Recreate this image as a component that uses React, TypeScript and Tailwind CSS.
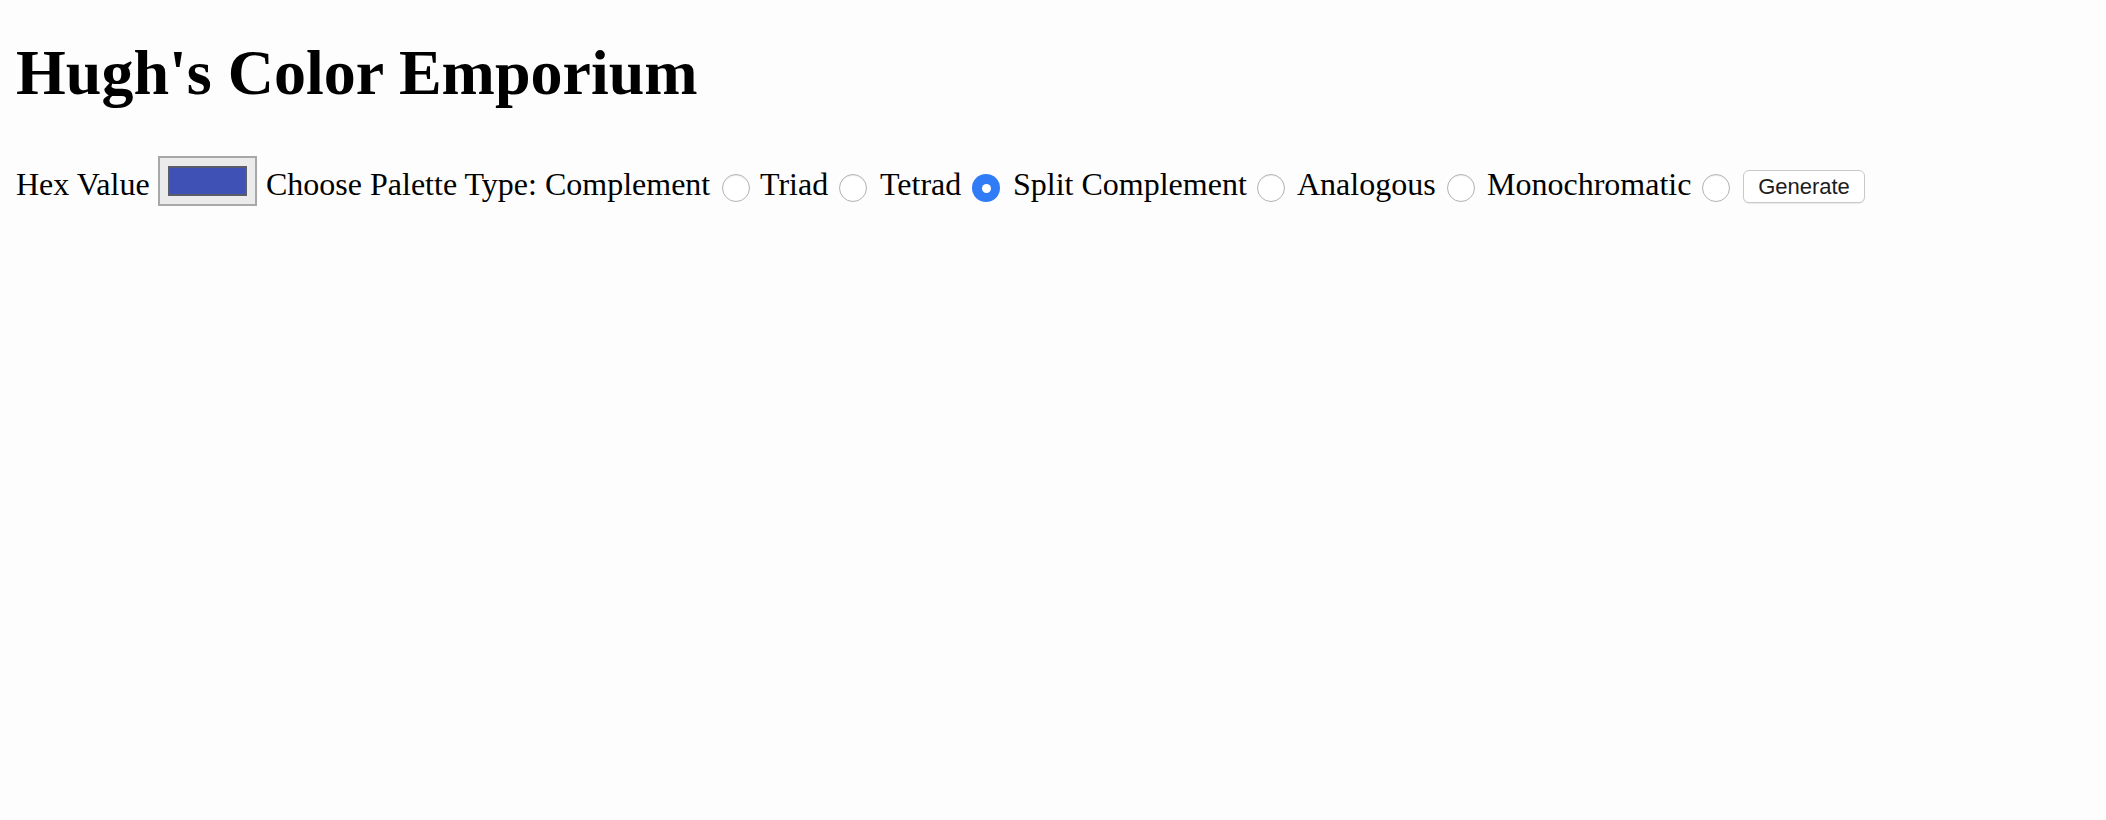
import { useState } from "react";

interface PaletteOption {
  label: string;
  textWidth: string;
  gapAfter: string;
}

// widths keep each radio where the reference puts it
const options: PaletteOption[] = [
  { label: "Choose Palette Type: Complement", textWidth: "w-[456px]", gapAfter: "mr-[10px]" },
  { label: "Triad", textWidth: "w-[79px]", gapAfter: "mr-[13px]" },
  { label: "Tetrad", textWidth: "w-[92px]", gapAfter: "mr-[13px]" },
  { label: "Split Complement", textWidth: "w-[244px]", gapAfter: "mr-[12px]" },
  { label: "Analogous", textWidth: "w-[150px]", gapAfter: "mr-[12px]" },
  { label: "Monochromatic", textWidth: "w-[215px]", gapAfter: "mr-[13px]" },
];

function Radio({ checked, onClick }: { checked: boolean; onClick: () => void }) {
  return (
    <span
      role="radio"
      aria-checked={checked}
      onClick={onClick}
      className={
        checked
          ? "mt-[18px] flex size-[28px] shrink-0 cursor-pointer items-center justify-center rounded-full bg-[#2f7cf6]"
          : "mt-[18px] flex size-[28px] shrink-0 cursor-pointer items-center justify-center rounded-full border-[1.5px] border-[#b3b3b3] bg-white shadow-[inset_0_1px_1px_rgba(0,0,0,0.08)]"
      }
    >
      {checked && <span className="size-[9px] rounded-full bg-white" />}
    </span>
  );
}

export default function App() {
  const [selected, setSelected] = useState(2);

  return (
    <div className="min-h-screen bg-[#fdfdfd] px-4 pt-[41px] font-['Liberation_Serif','Times_New_Roman',serif] text-black">
      <h1 className="text-[64px] leading-none font-bold">Hugh's Color Emporium</h1>

      <div className="mt-[51px] flex items-start whitespace-nowrap text-[32px] leading-none">
        <span className="mt-[12px] w-[142px] shrink-0">Hex Value</span>
        <div className="flex h-[50px] w-[99px] shrink-0 border-2 border-[#a8a8a8] bg-[#ebebeb] px-[8px] py-[8px]">
          <div className="size-full border-2 border-[#5a5c6a] bg-[#3f51b5]" />
        </div>
        <span className="ml-[9px]" />

        {options.map((opt, i) => (
          <div key={opt.label} className="flex items-start">
            <span className={`mt-[12px] shrink-0 ${opt.textWidth}`}>{opt.label}</span>
            <span className={opt.gapAfter}>
              <Radio checked={selected === i} onClick={() => setSelected(i)} />
            </span>
          </div>
        ))}

        <button
          type="button"
          className="mt-[14px] h-[33px] w-[122px] shrink-0 rounded-[6px] border border-[#c9c9c9] bg-white font-['Liberation_Sans',Arial,sans-serif] text-[22px] leading-none text-[#1c1c1c] shadow-[0_1px_1px_rgba(0,0,0,0.08)]"
        >
          Generate
        </button>
      </div>
    </div>
  );
}
